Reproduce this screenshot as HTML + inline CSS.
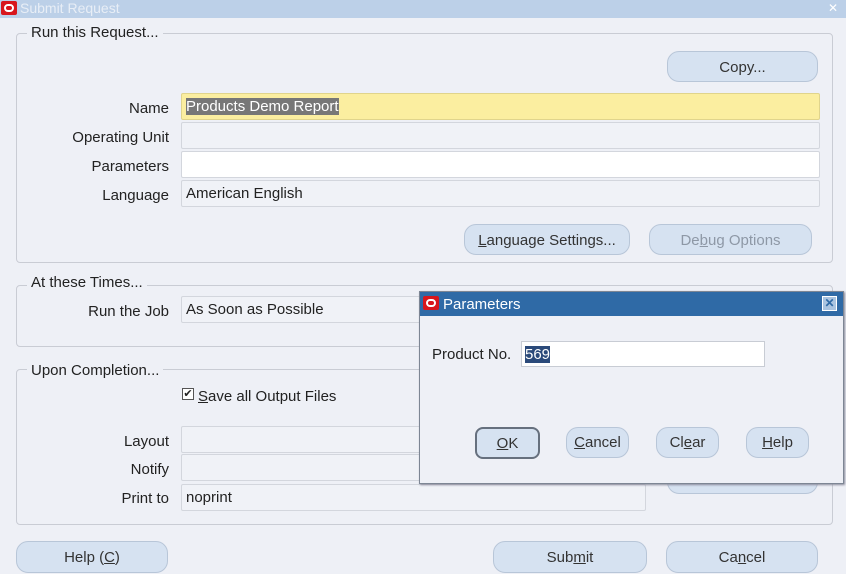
<!DOCTYPE html>
<html><head><style>
*{box-sizing:border-box;margin:0;padding:0}
body{width:846px;height:574px;overflow:hidden;background:#eef0f6;font-family:"Liberation Sans",sans-serif;font-size:15px;color:#222;position:relative}
.a{position:absolute}
.tb{left:0;top:0;width:846px;height:18px;background:#bcd0e8}
.grp{border:1px solid #c9ccd4;border-radius:4px}
.lg{background:#eef0f6;padding:0 4px}
.lbl{text-align:right;width:160px;left:9px}
.f{background:#f0f2f7;border:1px solid #d3d6dd;border-radius:2px;padding:4px 4px;height:27px}
.btn{background:#d6e2f1;border:1px solid #b8c6d8;border-radius:12px;text-align:center;line-height:31px;color:#333}
.dis{color:#8e98a6}
.logo{width:16px;height:14px;background:#d8161c;border-radius:2px}
.logo:after{content:"";position:absolute;left:3px;top:3px;width:10px;height:8px;border:2px solid #fff;border-radius:4px;box-sizing:border-box}
</style></head><body>
<div class="a tb"></div>
<div class="a logo" style="left:1px;top:1px"></div>
<div class="a" style="left:20px;top:0;color:#e8eef6;font-size:14px;line-height:17px">Submit Request</div>
<div class="a" style="left:826px;top:1px;width:14px;height:14px;color:#fff;font-size:12px;line-height:14px;text-align:center">✕</div>

<div class="a grp" style="left:16px;top:33px;width:817px;height:230px"></div>
<div class="a lg" style="left:27px;top:24px">Run this Request...</div>
<div class="a btn" style="left:667px;top:51px;width:151px;height:31px">Copy...</div>
<div class="a lbl" style="top:100px">Name</div>
<div class="a f" style="left:181px;top:93px;width:639px;background:#fbeea0;border-color:#e0d48c"><span style="background:#777;color:#fff">Products Demo Report</span></div>
<div class="a lbl" style="top:129px">Operating Unit</div>
<div class="a f" style="left:181px;top:122px;width:639px"></div>
<div class="a lbl" style="top:158px">Parameters</div>
<div class="a f" style="left:181px;top:151px;width:639px;background:#fff"></div>
<div class="a lbl" style="top:187px">Language</div>
<div class="a f" style="left:181px;top:180px;width:639px">American English</div>
<div class="a btn" style="left:464px;top:224px;width:166px;height:31px"><u>L</u>anguage Settings...</div>
<div class="a btn dis" style="left:649px;top:224px;width:163px;height:31px">De<u>b</u>ug Options</div>

<div class="a grp" style="left:16px;top:285px;width:817px;height:62px"></div>
<div class="a lg" style="left:27px;top:274px">At these Times...</div>
<div class="a lbl" style="top:303px">Run the Job</div>
<div class="a f" style="left:181px;top:296px;width:639px">As Soon as Possible</div>

<div class="a grp" style="left:16px;top:369px;width:817px;height:156px"></div>
<div class="a lg" style="left:27px;top:362px">Upon Completion...</div>
<div class="a" style="left:182px;top:388px;width:12px;height:12px;border:1px solid #555;background:#fff;font-size:11px;line-height:10px;text-align:center">✔</div>
<div class="a" style="left:198px;top:388px"><u>S</u>ave all Output Files</div>
<div class="a lbl" style="top:433px">Layout</div>
<div class="a f" style="left:181px;top:426px;width:465px"></div>
<div class="a lbl" style="top:461px">Notify</div>
<div class="a f" style="left:181px;top:454px;width:465px"></div>
<div class="a lbl" style="top:490px">Print to</div>
<div class="a f" style="left:181px;top:484px;width:465px">noprint</div>
<div class="a btn" style="left:667px;top:463px;width:151px;height:31px"></div>

<div class="a btn" style="left:16px;top:541px;width:152px;height:32px">Help (<u>C</u>)</div>
<div class="a btn" style="left:493px;top:541px;width:154px;height:32px">Sub<u>m</u>it</div>
<div class="a btn" style="left:666px;top:541px;width:152px;height:32px">Ca<u>n</u>cel</div>

<div class="a" style="left:419px;top:291px;width:425px;height:193px;background:#eef0f6;border:1px solid #7d8694;box-shadow:1px 1px 2px #889"></div>
<div class="a" style="left:420px;top:292px;width:423px;height:24px;background:#2f6aa6"></div>
<div class="a logo" style="left:423px;top:296px"></div>
<div class="a" style="left:443px;top:296px;color:#fff;font-size:15px">Parameters</div>
<div class="a" style="left:822px;top:296px;width:15px;height:15px;background:#aac4e0;border:1px solid #fff;color:#2f6aa6;font-size:12px;line-height:13px;text-align:center;font-weight:bold">✕</div>
<div class="a" style="left:432px;top:346px">Product No.</div>
<div class="a" style="left:521px;top:341px;width:244px;height:26px;background:#fff;border:1px solid #c8ccd4;padding:4px 3px"><span style="background:#2b4a7a;color:#fff">569</span></div>
<div class="a btn" style="left:475px;top:427px;width:65px;height:32px;border:2px solid #66707e;border-radius:8px;line-height:29px"><u>O</u>K</div>
<div class="a btn" style="left:566px;top:427px;width:63px;height:31px;line-height:29px"><u>C</u>ancel</div>
<div class="a btn" style="left:656px;top:427px;width:63px;height:31px;line-height:29px">Cl<u>e</u>ar</div>
<div class="a btn" style="left:746px;top:427px;width:63px;height:31px;line-height:29px"><u>H</u>elp</div>
</body></html>
